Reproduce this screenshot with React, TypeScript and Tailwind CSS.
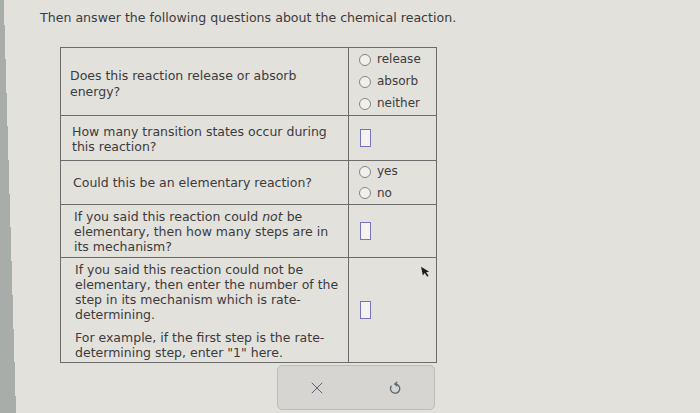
import { X } from "lucide-react";

const Radio = ({ label }: { label: string }) => (
  <div className="flex items-center gap-[6px] h-[22px]">
    <span className="w-[12px] h-[12px] rounded-full border border-[#858585] bg-[#f1f0ec]" />
    <span>{label}</span>
  </div>
);

const Box = () => (
  <span className="block w-[11px] h-[18px] border-[1.5px] border-[#7674c2] bg-[#f4f3f0]" />
);

const App = () => {
  return (
    <div className="relative w-[700px] h-[413px] overflow-hidden bg-[linear-gradient(88.3deg,#a8adaa_16px,#e3e1dc_16px)] font-['DejaVu_Sans',sans-serif] text-[#3b3b3b]">
      <p className="pl-[40px] pt-[9px] text-[12.6px] leading-[18px]">
        Then answer the following questions about the chemical reaction.
      </p>

      <div className="ml-[60px] mt-[20px] w-[377px] border border-[#6c6c6c] grid grid-cols-[288px_1fr] text-[12.5px] leading-[15px]">
        {/* energy */}
        <div className="h-[68px] flex items-center px-[9px] border-r border-b border-[#6c6c6c]">
          <p className="leading-[16px] pt-[5px]">Does this reaction release or absorb energy?</p>
        </div>
        <div className="h-[68px] flex flex-col justify-center pl-[10px] border-b border-[#6c6c6c] text-[12px]">
          <Radio label="release" />
          <Radio label="absorb" />
          <Radio label="neither" />
        </div>

        {/* transition states */}
        <div className="h-[45px] flex items-center px-[11px] pt-[1px] border-r border-b border-[#6c6c6c]">
          <p>How many transition states occur during this reaction?</p>
        </div>
        <div className="h-[45px] flex items-center pl-[11px] border-b border-[#6c6c6c]">
          <Box />
        </div>

        {/* elementary */}
        <div className="h-[44px] flex items-center px-[12px] border-r border-b border-[#6c6c6c]">
          <p>Could this be an elementary reaction?</p>
        </div>
        <div className="h-[44px] flex flex-col justify-center pl-[10px] border-b border-[#6c6c6c] text-[12px]">
          <Radio label="yes" />
          <Radio label="no" />
        </div>

        {/* steps */}
        <div className="h-[53px] flex items-center px-[13px] border-r border-b border-[#6c6c6c]">
          <p>
            If you said this reaction could <i>not</i> be elementary, then how many steps are in its mechanism?
          </p>
        </div>
        <div className="h-[53px] flex items-center pl-[11px] border-b border-[#6c6c6c]">
          <Box />
        </div>

        {/* rate-determining */}
        <div className="h-[104px] pl-[14px] pr-[2px] pt-[4px] border-r border-[#6c6c6c]">
          <p>
            If you said this reaction could not be elementary, then enter the number of the step in its mechanism which is rate-determining.
          </p>
          <p className="mt-[8px] pr-[8px]">For example, if the first step is the rate-determining step, enter "1" here.</p>
        </div>
        <div className="h-[104px] flex items-center pl-[11px]">
          <Box />
        </div>
      </div>

      <div className="ml-[277px] mt-[2px] w-[158px] h-[45px] rounded-[5px] border border-[#bdbcb8] bg-[#d6d5d2] flex">
        <div className="flex-1 flex items-center justify-center">
          <X size={20} strokeWidth={1.2} className="text-[#5b6470]" />
        </div>
        <div className="flex-1 flex items-center justify-center">
          <svg width="12" height="13" viewBox="0 0 12 13" fill="none" stroke="#5b6470" strokeWidth="1.3" strokeLinecap="round" strokeLinejoin="round">
            <path d="M2.2 5.2 A4.6 4.6 0 1 0 6 3" />
            <path d="M7.8 1.2 L6 3 L7.8 4.8" />
          </svg>
        </div>
      </div>

      {/* mouse pointer */}
      <svg className="absolute left-[421px] top-[265px]" width="9" height="13" viewBox="0 0 9 13">
        <path d="M1 1 L1 10 L3.3 8 L5 12 L6.5 11.3 L4.8 7.5 L8 7.5 Z" fill="#1e1e1e" transform="rotate(-12 4 6)" />
      </svg>
    </div>
  );
};

export default App;
